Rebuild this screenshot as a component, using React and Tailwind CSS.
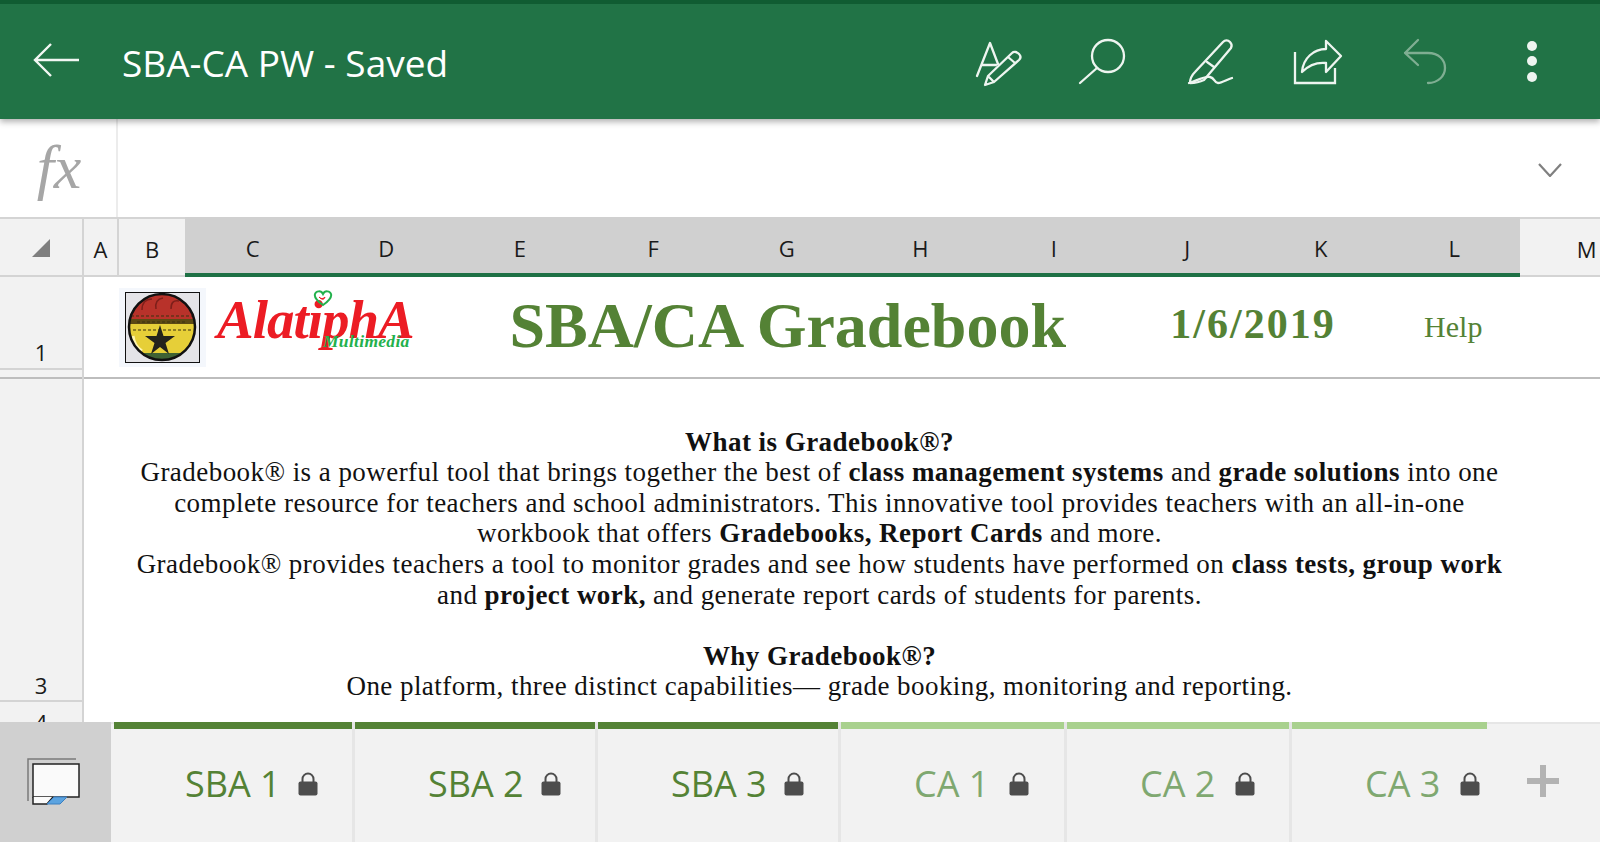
import React from "react";

const serif = "font-['Liberation_Serif',serif]";
const ui = "font-['Open_Sans',sans-serif]";
const columns = ["C", "D", "E", "F", "G", "H", "I", "J", "K", "L"];
const gridCols = "grid-cols-[35px_66px_repeat(10,133.5px)_133.5px]";

const tabs = [
  { name: "SBA 1", w: "w-[241px]", bar: "bg-[#548235]", text: "text-[#548235]", pl: "pl-[71px]", gap: "gap-[17px]" },
  { name: "SBA 2", w: "w-[243px]", bar: "bg-[#548235]", text: "text-[#548235]", pl: "pl-[73px]", gap: "gap-[17px]" },
  { name: "SBA 3", w: "w-[243px]", bar: "bg-[#548235]", text: "text-[#548235]", pl: "pl-[73px]", gap: "gap-[17px]" },
  { name: "CA 1", w: "w-[226px]", bar: "bg-[#a9d18e]", text: "text-[#7fa870]", pl: "pl-[73px]", gap: "gap-[20px]" },
  { name: "CA 2", w: "w-[225px]", bar: "bg-[#a9d18e]", text: "text-[#7fa870]", pl: "pl-[73px]", gap: "gap-[20px]" },
  { name: "CA 3", w: "w-[195px]", bar: "bg-[#a9d18e]", text: "text-[#7fa870]", pl: "pl-[73px]", gap: "gap-[20px]" },
];

const Back = () => (
  <svg width="48" height="36" viewBox="0 0 48 36" fill="none" stroke="#f2f7f4" strokeWidth="2.4">
    <path d="M46 18H2M18 2 2 18l16 16" />
  </svg>
);

const HeaderIcons = () => (
  <div className="absolute left-[970px] top-[26px]">
    <svg width="590" height="65" viewBox="0 0 590 65" fill="none" stroke="#eef5f0" strokeWidth="2.3" strokeLinejoin="round" strokeLinecap="round">
      {/* font + pencil */}
      <path d="M7 46 20 13l8 21M12 35h14" />
      <path d="M15 55l3-9 24-23c2-2 5-1 7 1 2 2 2 4 0 6L24 52ZM18 46l6 6M38 27l7 6" />
      {/* search */}
      <circle cx="138" cy="26" r="16" />
      <path d="M127 38 110 53" />
      {/* pen signing */}
      <path d="M253 12c2-2 5-2 7 0s2 4 1 6l-27 32c-4 2-8 3-14 3 0-4 2-8 5-11ZM237 32l7 5" />
      <path d="M219 53c7-2 15-7 21-6 5 1 4 6 8 6 4 0 8-3 14-5" />
      {/* share */}
      <path d="M325 22v31h40V38" strokeLinecap="butt" strokeLinejoin="miter" />
      <path d="M332 42C333 28 344 19 356 19V11L371 26 356 42V33C346 32 338 36 332 42Z" />
      {/* undo */}
      <path d="M448 10 435 23 448 35M435 23H458C469 23 475 30 475 38 475 46 468 53 458 53" stroke="#7fae92" />
      {/* more */}
      <g fill="#eef5f0" stroke="none">
        <circle cx="562" cy="16" r="5" />
        <circle cx="562" cy="31" r="5" />
        <circle cx="562" cy="47" r="5" />
      </g>
    </svg>
  </div>
);

const Lock = () => (
  <svg width="20" height="24" viewBox="0 0 20 24" className="shrink-0">
    <path d="M4.5 11V7a5.5 5.5 0 0 1 11 0v4" fill="none" stroke="#4d4d4d" strokeWidth="2" />
    <rect x="0.5" y="9.5" width="19" height="14" rx="2" fill="#4d4d4d" />
  </svg>
);

const SheetsIcon = () => (
  <svg width="54" height="48" viewBox="0 0 54 48" fill="none">
    <path d="M1 43V1h48" stroke="#7a7a7a" strokeWidth="1.5" />
    <rect x="6" y="6" width="46" height="33" fill="#fafafa" stroke="#222" strokeWidth="1.5" />
    <path d="M6 39v7h14l6-7" fill="#fafafa" stroke="#222" strokeWidth="1.5" />
    <path d="M20 46h13l7-7H27Z" fill="#5ba3e0" stroke="#3a7fc0" strokeWidth="1" />
  </svg>
);

const Emblem = () => (
  <svg width="75" height="71" viewBox="0 0 75 71">
    <rect width="75" height="71" fill="#e4e4e8" stroke="#111" strokeWidth="2" />
    <clipPath id="ball"><circle cx="37" cy="35" r="33" /></clipPath>
    <g clipPath="url(#ball)">
      <rect width="75" height="27" fill="#b8322a" />
      <rect y="27" width="75" height="5" fill="#5c4a14" />
      <rect y="32" width="75" height="29" fill="#e6cf38" />
      <rect y="61" width="75" height="10" fill="#3e6234" />
      <path d="M17 18c0-7 4-11 10-11M31 17c-1-6 1-10 7-11M46 17c0-6 2-9 8-8" fill="none" stroke="#7e1f1a" strokeWidth="1.5" />
      <path d="M6 24h62M12 30h50M8 38h58" stroke="#3a3110" strokeWidth="1.2" strokeDasharray="3 2" />
      <path d="M35 33 38.500 44H50L40.500 51 44 62 35 55 26 62 29.500 51 20 44H31.500Z" fill="#23231c" />
      <path d="M8 44c1 8 4 12 9 15" fill="none" stroke="#fff6b0" strokeWidth="3" />
    </g>
    <circle cx="37" cy="35" r="33" fill="none" stroke="#111" strokeWidth="2.5" />
  </svg>
);

const Logo = () => (
  <div className="col-span-3 flex items-center h-full">
    <div className="w-[87px] h-[79px] mt-[1px] bg-[#f4f7fc] flex items-center justify-center">
      <Emblem />
    </div>
    <div className="relative ml-[11px] w-[200px] h-[70px]">
      <span className="absolute left-0 top-[5px] text-[55px] leading-[46px] italic font-bold text-[#ec1c24] font-['Liberation_Serif',serif] tracking-[-1px] whitespace-nowrap">AlatiphA</span>
      <span className="absolute left-[106px] top-[41px] text-[17.5px] leading-[16px] italic font-bold text-[#22b14c] font-['Liberation_Serif',serif] tracking-[0.3px] whitespace-nowrap">Multimedia</span>
      <svg className="absolute left-[96px] top-[-3px]" width="20" height="18" viewBox="0 0 20 18" fill="none">
        <path d="M10 16C3 11 1 8 2 5c1-3 6-4 8 0 2-4 7-3 8 0 1 3-1 6-8 11Z" stroke="#22b14c" strokeWidth="2" />
        <path d="M6 8c2 2 4 2 6 0-1 3-3 3-6 0Z" fill="#ec1c24" stroke="#ec1c24" />
      </svg>
    </div>
  </div>
);

export default function App() {
  return (
    <div className="w-[1600px] h-[842px] overflow-hidden flex flex-col bg-white text-black relative">
      {/* top bar */}
      <header className={`${ui} relative z-10 h-[119px] shrink-0 bg-[#217346] border-t-4 border-[#105c32] shadow-[0_3px_6px_rgba(0,0,0,0.3)] flex items-center text-white`}>
        <div className="ml-[33px] mt-[-3px]"><Back /></div>
        <span className="ml-[41px] mt-[2px] text-[37px] whitespace-nowrap">SBA-CA PW - Saved</span>
        <HeaderIcons />
      </header>

      {/* formula bar */}
      <div className="h-[98px] shrink-0 flex items-stretch bg-white">
        <div className="w-[118px] border-r-2 border-[#ececec] flex items-center justify-center">
          <span className={`${serif} italic text-[#a6a6a6] text-[62px] leading-none mt-[-3px] pl-[2px]`}>fx</span>
        </div>
        <div className="flex-1 flex items-center justify-end pr-[38px] pt-[4px]">
          <svg width="24" height="14" viewBox="0 0 24 14" fill="none" stroke="#808080" strokeWidth="2.2"><path d="M1 1l11 12L23 1" /></svg>
        </div>
      </div>

      {/* column headers */}
      <div className={`${ui} h-[60px] shrink-0 flex text-[22px] text-[#1a1a1a]`}>
        <div className="w-[84px] shrink-0 bg-[#f2f2f2] border-r-2 border-t-2 border-b-2 border-[#d4d4d4] relative flex items-center">
          <div className="ml-[32px] mt-[2px] w-0 h-0 border-l-[18px] border-l-transparent border-b-[18px] border-b-[#7f7f7f]" />
        </div>
        <div className={`grid ${gridCols} flex-1`}>
          <div className="bg-[#f2f2f2] border-r-2 border-t-2 border-b-2 border-[#d4d4d4] flex items-center justify-center pt-[4px]">A</div>
          <div className="bg-[#f2f2f2] border-t-2 border-b-2 border-[#d4d4d4] flex items-center justify-center pt-[4px]">B</div>
          {columns.map((c) => (
            <div key={c} className="bg-[#d0d0d0] border-b-4 border-[#1e7145] flex items-center justify-center pt-[6px] pl-[2px]">{c}</div>
          ))}
          <div className="bg-[#f2f2f2] border-t-2 border-b-2 border-[#d4d4d4] flex items-center justify-center pt-[4px]">M</div>
        </div>
      </div>

      {/* sheet */}
      <div className="flex-1 min-h-0 flex overflow-hidden">
        <div className={`${ui} w-[84px] shrink-0 bg-[#f2f2f2] border-r-2 border-[#d4d4d4] flex flex-col text-[22px] text-[#1a1a1a] text-center`}>
          <div className="h-[93px] shrink-0 border-b-2 border-[#d4d4d4] flex items-end justify-center leading-[28px] pb-[2px]">1</div>
          <div className="h-[9px] shrink-0 border-b-2 border-[#bdbdbd]" />
          <div className="h-[323px] shrink-0 border-b-2 border-[#d4d4d4] flex items-end justify-center leading-[28px] pb-[1px]">3</div>
          <div className="flex-1 leading-[28px] pt-[6px]">4</div>
        </div>
        <div className={`flex-1 grid ${gridCols} grid-rows-[102px_323px_1fr] ${serif}`}>
          {/* row 1 */}
          <div className="border-b-2 border-[#bdbdbd] col-span-13 grid grid-cols-subgrid items-center">
            <div />
            <Logo />
            <div className="col-span-5 col-start-5 text-center font-bold text-[#548235] text-[64px] leading-none mt-[-2px] pl-[4px] whitespace-nowrap">SBA/CA Gradebook</div>
            <div className="col-span-2 text-center font-bold text-[#548235] text-[42px] leading-none mt-[-6px] tracking-[2px]">1/6/2019</div>
            <div className="text-center text-[#548235] text-[30px] leading-none">Help</div>
          </div>
          {/* row 3 */}
          <div className="col-start-2 col-span-11 flex flex-col items-center justify-end text-center text-[27px] tracking-[0.45px] leading-[30.6px] text-[#111] whitespace-nowrap">
            <p className="font-bold">What is Gradebook®?</p>
            <p>Gradebook® is a powerful tool that brings together the best of <b>class management systems</b> and <b>grade solutions</b> into one</p>
            <p>complete resource for teachers and school administrators. This innovative tool provides teachers with an all-in-one</p>
            <p>workbook that offers <b>Gradebooks, Report Cards</b> and more.</p>
            <p>Gradebook® provides teachers a tool to monitor grades and see how students have performed on <b>class tests, group work</b></p>
            <p>and <b>project work,</b> and generate report cards of students for parents.</p>
            <p>&nbsp;</p>
            <p className="font-bold">Why Gradebook®?</p>
            <p>One platform, three distinct capabilities— grade booking, monitoring and reporting.</p>
          </div>
        </div>
      </div>

      {/* sheet tabs */}
      <footer className={`${ui} h-[120px] shrink-0 flex bg-[#f2f2f2] border-t-2 border-[#e6e6e6] relative z-10 mt-[-2px]`}>
        <div className="w-[111px] shrink-0 bg-[#d0d0d0] flex items-center justify-center pr-[3px] mt-[-2px]">
          <SheetsIcon />
        </div>
        <div className="flex pl-[3px] mt-[-2px]">
          {tabs.map((t) => (
            <div key={t.name} className={`${t.w} flex flex-col border-r-[3px] border-[#e6e6e6] last:border-r-0`}>
              <div className={`h-[7px] ${t.bar}`} />
              <div className={`flex-1 flex items-center ${t.pl} ${t.gap} pb-[4px]`}>
                <span className={`${t.text} text-[36px] leading-none whitespace-nowrap`}>{t.name}</span>
                <Lock />
              </div>
            </div>
          ))}
        </div>
        <div className="flex-1 flex items-center pl-[40px] pb-[3px] mt-[-2px]">
          <svg width="32" height="32" viewBox="0 0 32 32" fill="#b3b3b3"><path d="M13 0h6v13h13v6H19v13h-6V19H0v-6h13Z" /></svg>
        </div>
      </footer>
    </div>
  );
}
